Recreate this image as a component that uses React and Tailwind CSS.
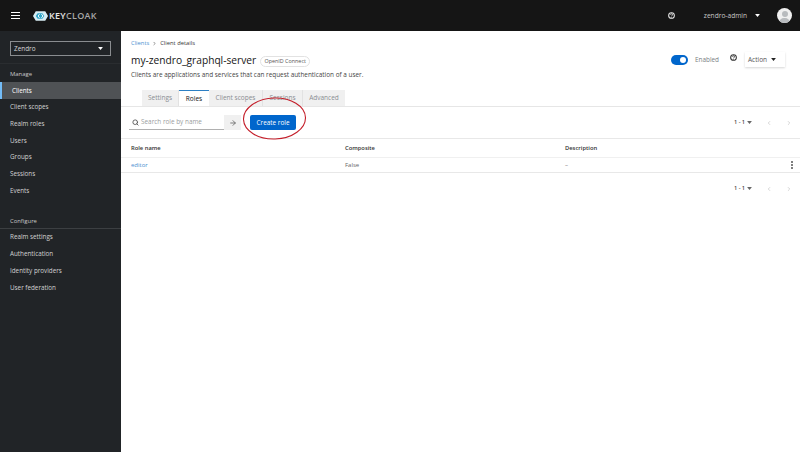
import { ArrowRight, ChevronLeft, ChevronRight, Search } from 'lucide-react';

const font = { fontFamily: '"Open Sans", "Liberation Sans", sans-serif' };

const Caret = ({ className = '' }) => (
  <svg viewBox="0 0 8 5" className={`w-[5px] h-[3px] ${className}`}>
    <path d="M0 0h8L4 5z" fill="currentColor" />
  </svg>
);

const HelpIcon = ({ className = '' }) => (
  <svg viewBox="0 0 16 16" className={`w-[7px] h-[7px] ${className}`} fill="none" stroke="currentColor">
    <circle cx="8" cy="8" r="6.5" strokeWidth="2.4" />
    <path d="M5.8 6.4c0-3 4.6-3 4.6-.2 0 1.800-2.300 1.800-2.300 3.600" strokeWidth="2" />
    <circle cx="8" cy="12" r="0.6" strokeWidth="1.2" />
  </svg>
);

const NavItem = ({ label, active }) => (
  <div
    className={`h-[16.7px] flex items-center pl-[10px] text-[6.3px] ${
      active ? 'bg-[#4f5255] text-white border-l-[2px] border-[#73bcf7] pl-[8px]' : 'text-[#d2d2d2]'
    }`}
  >
    {label}
  </div>
);

const Pager = () => (
  <div className="flex items-center text-[#6a6e73]">
    <span className="text-[5.5px] font-semibold text-[#444]">1 - 1</span>
    <Caret className="ml-[2px] text-[#666]" />
    <ChevronLeft className="w-[6px] h-[6px] ml-[14px] text-[#c8c8c8]" strokeWidth={3} />
    <ChevronRight className="w-[6px] h-[6px] ml-[14px] mr-[8px] text-[#c8c8c8]" strokeWidth={3} />
  </div>
);

const Tab = ({ label, active, className = '' }) => (
  <div
    className={`h-[16px] flex items-center justify-center text-[6.5px] ${className} ${
      active
        ? 'bg-white text-[#151515] border-t-[1.5px] border-[#2b7fc4]'
        : 'bg-[#f0f0f0] text-[#8a8d90] border-r border-[#e2e2e2]'
    }`}
  >
    {label}
  </div>
);

export default function App() {
  return (
    <div className="relative w-[800px] h-[452px] overflow-hidden bg-white flex flex-col" style={font}>
      <header className="h-[31px] shrink-0 bg-[#151515] flex items-center">
        <div className="ml-[11px] w-[9px] flex flex-col gap-[1.5px]">
          <div className="h-[1.5px] bg-white" />
          <div className="h-[1.5px] bg-white" />
          <div className="h-[1.5px] bg-white" />
        </div>
        <svg viewBox="0 0 18 12" className="w-[17px] h-[12px] ml-[12px]">
          <path d="M1 6l3-5h10l3 5-3 5H4z" fill="#d8eef5" />
          <path d="M6 3h5l2 3-2 3H6l-2-3z" fill="#2fa6c9" />
          <path d="M8 4L6.500 6 8 8M10 4l1.500 2L10 8" stroke="#fff" strokeWidth="1" fill="none" />
        </svg>
        <span className="text-[9px] tracking-[0.3px] font-semibold text-[#e8e8e8]">KEY</span>
        <span className="text-[9px] tracking-[0.3px] font-semibold text-[#a8a8a8]">CLOAK</span>
        <div className="ml-auto flex items-center">
          <HelpIcon className="text-[#e8e8e8]" />
          <span className="ml-[29px] text-[6.6px] text-[#c8c8c8]">zendro-admin</span>
          <Caret className="ml-[8px] text-white" />
          <div className="ml-[17px] mr-[8px] w-[15px] h-[15px] rounded-full bg-[#f0f0f0] overflow-hidden flex flex-col items-center">
            <div className="w-[6px] h-[6px] mt-[3px] rounded-full bg-[#b8bbbe]" />
            <div className="w-[11px] h-[6px] mt-[1px] rounded-t-full bg-[#b8bbbe]" />
          </div>
        </div>
      </header>

      <div className="flex flex-1 min-h-0">
        <aside className="w-[121px] shrink-0 bg-[#212427] flex flex-col">
          <div className="pt-[10px] px-[10px] pb-[7px] border-b border-[#2a2d30]">
            <div className="h-[15px] border border-[#8a8d90] flex items-center justify-between pl-[3px] pr-[7px] text-[6.4px] text-[#d8d8d8]">
              Zendro
              <Caret className="text-white" />
            </div>
          </div>
          <div className="h-[13px] mt-[4px] mb-[1px] flex items-center pl-[10px] text-[5.9px] text-[#c8c8c8]">Manage</div>
          <NavItem label="Clients" active />
          <NavItem label="Client scopes" />
          <NavItem label="Realm roles" />
          <NavItem label="Users" />
          <NavItem label="Groups" />
          <NavItem label="Sessions" />
          <NavItem label="Events" />
          <div className="h-[14px] mt-[16px] flex items-center pl-[10px] text-[5.9px] text-[#c8c8c8] border-b border-[#3c3f42]">
            Configure
          </div>
          <NavItem label="Realm settings" />
          <NavItem label="Authentication" />
          <NavItem label="Identity providers" />
          <NavItem label="User federation" />
        </aside>

        <main className="flex-1 min-w-0 flex flex-col">
          <div className="pl-[10px] pt-[8px] flex items-center h-[17px] text-[5.8px]">
            <span className="text-[#4a90d0]">Clients</span>
            <ChevronRight className="w-[5px] h-[5px] mx-[3px] text-[#555]" strokeWidth={3} />
            <span className="text-[#333]">Client details</span>
          </div>
          <div className="flex items-start pl-[10px] mt-[5px]">
            <div>
              <div className="flex items-center h-[16px]">
                <span className="text-[10.2px] font-medium text-[#151515]">my-zendro_graphql-server</span>
                <span className="ml-[4px] h-[11px] w-[50px] rounded-full border border-[#e2e2e2] flex items-center justify-center text-[5.4px] text-[#555]">
                  OpenID Connect
                </span>
              </div>
              <p className="text-[6.4px] text-[#444] mt-[1px] leading-[10px]">
                Clients are applications and services that can request authentication of a user.
              </p>
            </div>
            <div className="ml-auto flex items-center mt-[-1px]">
              <div className="w-[17px] h-[10px] rounded-full bg-[#06c] flex items-center justify-end pr-[2px]">
                <div className="w-[6px] h-[6px] rounded-full bg-white" />
              </div>
              <span className="ml-[7px] text-[6.4px] text-[#7a7e83]">Enabled</span>
              <HelpIcon className="ml-[11px] mt-[-4px] text-[#333]" />
              <div className="ml-[8px] mr-[15px] w-[40px] h-[15px] pl-[3px] pr-[9px] flex items-center justify-between text-[6.5px] text-[#555] shadow-[0_1px_2px_rgba(0,0,0,0.16)]">
                Action
                <Caret className="text-[#222]" />
              </div>
            </div>
          </div>

          <div className="mt-[10px] h-[16px] box-content border-b border-[#e6e6e6] flex pl-[21px]">
            <Tab label="Settings" className="w-[37px]" />
            <Tab label="Roles" active className="w-[30px]" />
            <Tab label="Client scopes" className="w-[54px]" />
            <Tab label="Sessions" className="w-[40px]" />
            <Tab label="Advanced" className="w-[42px] border-r-0" />
          </div>

          <div className="h-[32px] flex items-center border-b border-[#e8e8e8] pl-[8px]">
            <div className="w-[95px] h-[15px] border-b border-[#b0b0b0] flex items-center pl-[3px]">
              <Search className="w-[7px] h-[7px] text-[#555]" strokeWidth={3} />
              <span className="ml-[2px] text-[6.4px] text-[#9a9da0]">Search role by name</span>
            </div>
            <div className="w-[17px] h-[15px] bg-[#f0f0f0] flex items-center justify-center">
              <ArrowRight className="w-[8px] h-[8px] text-[#666]" strokeWidth={2.5} />
            </div>
            <button className="ml-[9px] w-[46px] h-[15px] rounded-[2px] bg-[#06c] text-white text-[6.4px] flex items-center justify-center">
              Create role
            </button>
            <div className="ml-auto">
              <Pager />
            </div>
          </div>

          <div className="h-[19px] flex items-center border-b border-[#f0f0f0] pl-[10px] text-[5.8px] font-semibold text-[#333]">
            <span className="w-[214px]">Role name</span>
            <span className="w-[220px]">Composite</span>
            <span>Description</span>
          </div>
          <div className="h-[15px] flex items-center border-b border-[#e8e8e8] pl-[10px] text-[6px] text-[#666]">
            <span className="w-[214px] text-[#4a90d0]">editor</span>
            <span className="w-[220px]">False</span>
            <span>–</span>
            <div className="ml-auto mr-[7px] flex flex-col gap-[1px]">
              <div className="w-[2px] h-[2px] rounded-full bg-[#555]" />
              <div className="w-[2px] h-[2px] rounded-full bg-[#555]" />
              <div className="w-[2px] h-[2px] rounded-full bg-[#555]" />
            </div>
          </div>
          <div className="h-[31px] flex items-center justify-end">
            <Pager />
          </div>
        </main>
      </div>

      <svg viewBox="0 0 66 46" className="absolute left-[241px] top-[96px] w-[66px] h-[46px] pointer-events-none">
        <ellipse cx="33.500" cy="22.500" rx="31" ry="20.500" fill="none" stroke="#c41e2a" strokeWidth="1.100" transform="rotate(-2 33 23)" />
      </svg>
    </div>
  );
}
